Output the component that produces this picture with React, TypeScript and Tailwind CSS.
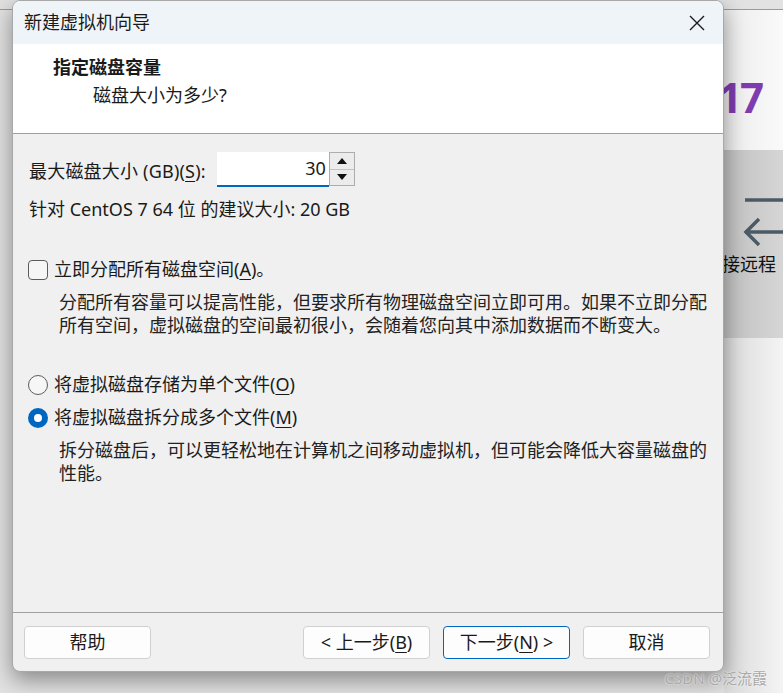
import React, { useState } from 'react';

const font = "font-['Noto_Sans','Noto_Sans_CJK_SC',sans-serif]";

const U: React.FC<{ children: React.ReactNode }> = ({ children }) => (
  <span className="underline underline-offset-[3px] decoration-[1px]">{children}</span>
);

const WizButton: React.FC<{ children: React.ReactNode; primary?: boolean }> = ({ children, primary }) => (
  <button
    className={
      primary
        ? 'w-[127px] h-[33px] rounded-[4px] bg-[#fdfdfd] border border-[#0067c0] text-[18px] leading-[23px] text-[#1a1a1a] flex items-center justify-center'
        : 'w-[127px] h-[33px] rounded-[4px] bg-[#fdfdfd] border border-[#d0d0d0] text-[18px] leading-[23px] text-[#1a1a1a] flex items-center justify-center'
    }
  >
    {children}
  </button>
);

export default function App() {
  const [size, setSize] = useState(30);
  const [allocate, setAllocate] = useState(false);
  const [mode, setMode] = useState<'single' | 'multi'>('multi');

  return (
    <div className={`relative w-[783px] h-[693px] overflow-hidden bg-[#e2e2e2] ${font} text-[#1a1a1a]`}>
      {/* 背后的主窗口 */}
      <div className="absolute inset-x-0 top-0 h-[10px] bg-[#e2e2e2] border-b border-[#7fa2b6]" />
      <div className="absolute left-[724px] right-0 top-[10px] h-[140px] bg-gradient-to-r from-[#ececec] to-[#fafafa]">
        <div className="pt-[66px] text-[42px] leading-[42px] font-bold text-[#7e3cae] tracking-[-2px] -ml-[6px]">17</div>
      </div>
      <div className="absolute left-[724px] right-0 top-[150px] h-[188px] bg-gradient-to-r from-[#c0c0c0] to-[#d6d6d6]">
        <svg width="50" height="50" viewBox="0 0 50 50" className="ml-[18px] mt-[47px]">
          <line x1="3" y1="3" x2="50" y2="3" stroke="#4b5a65" strokeWidth="3.5" />
          <line x1="3" y1="35" x2="50" y2="35" stroke="#4b5a65" strokeWidth="3.5" />
          <polyline points="17,22 4,35 17,48" fill="none" stroke="#4b5a65" strokeWidth="3.5" />
        </svg>
        <div className="mt-[6px] -ml-[2px] text-[18px] leading-[23px] whitespace-nowrap text-[#111]">接远程</div>
      </div>
      <div className="absolute left-[724px] right-0 top-[338px] bottom-0 bg-gradient-to-r from-[#dadada] to-[#f4f4f4]" />

      {/* 向导对话框 */}
      <div className="absolute left-[12px] top-0 w-[712px] h-[672px] rounded-[8px] border border-[#a8a8a8] bg-[#f0f0f0] overflow-hidden flex flex-col shadow-[0_8px_22px_rgba(0,0,0,0.4)]">
        <div className="h-[43px] shrink-0 bg-[#eff4f9] flex items-center justify-between pl-[11px] pr-[18px]">
          <span className="text-[18px] leading-[23px]">新建虚拟机向导</span>
          <svg width="16" height="16" viewBox="0 0 16 16">
            <path d="M1 1 L15 15 M15 1 L1 15" stroke="#1c1c1c" strokeWidth="1.4" />
          </svg>
        </div>

        <div className="h-[90px] shrink-0 bg-white border-b border-[#a0a0a0] pl-[40px] pt-[12px]">
          <div className="text-[18px] leading-[23px] font-bold">指定磁盘容量</div>
          <div className="pl-[40px] mt-[5px] text-[18px] leading-[23px]">磁盘大小为多少?</div>
        </div>

        <div className="flex-1 flex flex-col px-[15px] text-[18px] leading-[23px]">
          <div className="mt-[18px] flex items-center pl-[1px]">
            <span className="mt-[4px] tracking-[0.2px]">
              最大磁盘大小 (GB)(<U>S</U>):
            </span>
            <div className="ml-[11px] w-[112px] h-[35px] bg-white border-b-2 border-[#0067c0] flex items-center justify-end pr-[3px]">
              <input
                value={size}
                onChange={(e) => setSize(parseInt(e.target.value) || 0)}
                className="w-full text-right bg-transparent outline-none text-[18px]"
              />
            </div>
            <div className="w-[26px] h-[34px] border border-[#adadad] bg-[#f0f0f0] flex flex-col self-start">
              <button onClick={() => setSize(size + 1)} className="flex-1 flex items-center justify-center border-b border-[#c4c4c4] bg-[#ececec]">
                <svg width="10" height="6" viewBox="0 0 10 6"><polygon points="0,6 5,0 10,6" fill="#111" /></svg>
              </button>
              <button onClick={() => setSize(Math.max(1, size - 1))} className="flex-1 flex items-center justify-center bg-[#ececec]">
                <svg width="10" height="6" viewBox="0 0 10 6"><polygon points="0,0 10,0 5,6" fill="#111" /></svg>
              </button>
            </div>
          </div>

          <div className="mt-[11px] pl-[1px]">针对 CentOS 7 64 位 的建议大小: 20 GB</div>

          <label className="mt-[37px] flex items-center gap-[6px] cursor-default">
            <span
              onClick={() => setAllocate(!allocate)}
              className={
                allocate
                  ? 'w-[20px] h-[20px] rounded-[4px] bg-[#0067c0] border border-[#0067c0] flex items-center justify-center'
                  : 'w-[20px] h-[20px] rounded-[4px] bg-[#f6f6f6] border border-[#5c5c5c]'
              }
            >
              {allocate && (
                <svg width="12" height="10" viewBox="0 0 12 10"><polyline points="1,5 4.5,8.5 11,1" fill="none" stroke="white" strokeWidth="1.6" /></svg>
              )}
            </span>
            <span>
              立即分配所有磁盘空间(<U>A</U>)。
            </span>
          </label>

          <div className="mt-[10px] pl-[31px] whitespace-nowrap text-[#222]">
            分配所有容量可以提高性能，但要求所有物理磁盘空间立即可用。如果不立即分配
            <br />
            所有空间，虚拟磁盘的空间最初很小，会随着您向其中添加数据而不断变大。
          </div>

          <label className="mt-[36px] flex items-center gap-[6px]" onClick={() => setMode('single')}>
            <span
              className={
                mode === 'single'
                  ? 'w-[20px] h-[20px] rounded-full bg-[#0067c0] flex items-center justify-center'
                  : 'w-[20px] h-[20px] rounded-full border border-[#5c5c5c] bg-[#f6f6f6]'
              }
            >
              {mode === 'single' && <span className="w-[8px] h-[8px] rounded-full bg-white" />}
            </span>
            <span>
              将虚拟磁盘存储为单个文件(<U>O</U>)
            </span>
          </label>

          <label className="mt-[10px] flex items-center gap-[6px]" onClick={() => setMode('multi')}>
            <span
              className={
                mode === 'multi'
                  ? 'w-[20px] h-[20px] rounded-full bg-[#0067c0] flex items-center justify-center'
                  : 'w-[20px] h-[20px] rounded-full border border-[#5c5c5c] bg-[#f6f6f6]'
              }
            >
              {mode === 'multi' && <span className="w-[8px] h-[8px] rounded-full bg-white" />}
            </span>
            <span>
              将虚拟磁盘拆分成多个文件(<U>M</U>)
            </span>
          </label>

          <div className="mt-[10px] pl-[31px] whitespace-nowrap text-[#222]">
            拆分磁盘后，可以更轻松地在计算机之间移动虚拟机，但可能会降低大容量磁盘的
            <br />
            性能。
          </div>
        </div>

        <div className="h-[59px] shrink-0 border-t border-[#a0a0a0] flex items-center pl-[11px] pr-[13px]">
          <WizButton>帮助</WizButton>
          <div className="flex-1" />
          <div className="flex gap-[13px]">
            <WizButton>
              &lt; 上一步(<U>B</U>)
            </WizButton>
            <WizButton primary>
              下一步(<U>N</U>) &gt;
            </WizButton>
            <WizButton>取消</WizButton>
          </div>
        </div>
      </div>

      <div className="absolute right-[16px] bottom-[5px] text-[15px] leading-[20px] text-[#a8a8a8] [text-shadow:0_0_2px_white]">
        CSDN @泛流霞
      </div>
    </div>
  );
}
